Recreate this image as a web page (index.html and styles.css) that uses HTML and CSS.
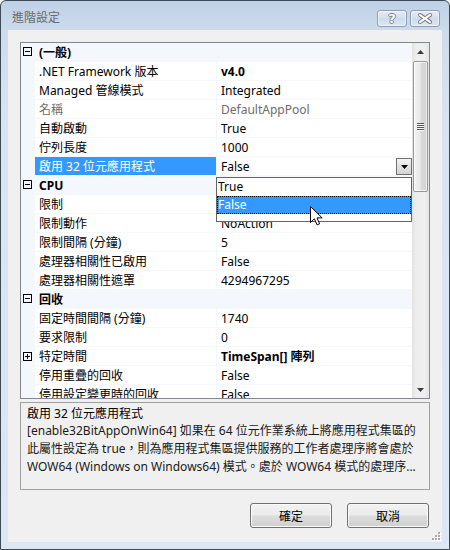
FILE: index.html
```html
<!DOCTYPE html>
<html lang="zh-Hant">
<head>
<meta charset="utf-8">
<title>進階設定</title>
<link rel="stylesheet" href="styles.css">
</head>
<body>
<div class="window">
  <div class="titlebar">
    <span class="title">進階設定</span>
    <div class="caption-btns">
      <div class="cbtn"><span class="help-glyph">?</span></div>
      <div class="cbtn">
        <svg width="14" height="11" viewBox="0 0 14 11">
          <path d="M2 2L12 9M12 2L2 9" stroke="#7a7f86" stroke-width="4" stroke-linecap="square"/>
          <path d="M2 2L12 9M12 2L2 9" stroke="#ffffff" stroke-width="2" stroke-linecap="square"/>
        </svg>
      </div>
    </div>
  </div>
  <div class="client">
    <div class="grid">
      <div class="rows">
        <div class="row cat">
          <span class="gut"><svg class="exp" width="9" height="9" viewBox="0 0 9 9"><rect x="0.5" y="0.5" width="8" height="8" fill="none" stroke="#000"/><path d="M2 4.5H7" stroke="#000"/></svg></span>
          <span class="catname">(一般)</span>
        </div>
        <div class="row"><span class="gut"></span><span class="name">.NET Framework 版本</span><span class="val bold">v4.0</span></div>
        <div class="row"><span class="gut"></span><span class="name">Managed 管線模式</span><span class="val">Integrated</span></div>
        <div class="row"><span class="gut"></span><span class="name gray">名稱</span><span class="val gray">DefaultAppPool</span></div>
        <div class="row"><span class="gut"></span><span class="name">自動啟動</span><span class="val">True</span></div>
        <div class="row"><span class="gut"></span><span class="name">佇列長度</span><span class="val">1000</span></div>
        <div class="row"><span class="gut"></span><span class="name selected">啟用 32 位元應用程式</span><span class="val editor">False<span class="dd-btn"><svg width="7" height="4" viewBox="0 0 7 4"><path d="M0 0H7L3.5 4Z" fill="#000"/></svg></span></span></div>
        <div class="row cat">
          <span class="gut"><svg class="exp" width="9" height="9" viewBox="0 0 9 9"><rect x="0.5" y="0.5" width="8" height="8" fill="none" stroke="#000"/><path d="M2 4.5H7" stroke="#000"/></svg></span>
          <span class="catname">CPU</span>
        </div>
        <div class="row"><span class="gut"></span><span class="name">限制</span><span class="val"></span></div>
        <div class="row"><span class="gut"></span><span class="name">限制動作</span><span class="val">NoAction</span></div>
        <div class="row"><span class="gut"></span><span class="name">限制間隔 (分鐘)</span><span class="val">5</span></div>
        <div class="row"><span class="gut"></span><span class="name">處理器相關性已啟用</span><span class="val">False</span></div>
        <div class="row"><span class="gut"></span><span class="name">處理器相關性遮罩</span><span class="val">4294967295</span></div>
        <div class="row cat">
          <span class="gut"><svg class="exp" width="9" height="9" viewBox="0 0 9 9"><rect x="0.5" y="0.5" width="8" height="8" fill="none" stroke="#000"/><path d="M2 4.5H7" stroke="#000"/></svg></span>
          <span class="catname">回收</span>
        </div>
        <div class="row"><span class="gut"></span><span class="name">固定時間間隔 (分鐘)</span><span class="val">1740</span></div>
        <div class="row"><span class="gut"></span><span class="name">要求限制</span><span class="val">0</span></div>
        <div class="row"><span class="gut"><svg class="exp" width="9" height="9" viewBox="0 0 9 9"><rect x="0.5" y="0.5" width="8" height="8" fill="none" stroke="#000"/><path d="M2 4.5H7M4.5 2V7" stroke="#000"/></svg></span><span class="name">特定時間</span><span class="val bold">TimeSpan[] 陣列</span></div>
        <div class="row"><span class="gut"></span><span class="name">停用重疊的回收</span><span class="val">False</span></div>
        <div class="row"><span class="gut"></span><span class="name">停用設定變更時的回收</span><span class="val">False</span></div>
      </div>
      <div class="vscroll">
        <div class="sb-btn"><svg width="7" height="4" viewBox="0 0 7 4"><path d="M0 4L3.5 0L7 4Z" fill="#3c3c3c"/></svg></div>
        <div class="sb-track">
          <div class="sb-thumb">
            <div class="grip"><i></i><i></i><i></i><i></i></div>
          </div>
        </div>
        <div class="sb-btn"><svg width="7" height="4" viewBox="0 0 7 4"><path d="M0 0H7L3.5 4Z" fill="#3c3c3c"/></svg></div>
      </div>
      <div class="dropdown">
        <div class="dd-item">True</div>
        <div class="dd-item sel">False</div>
      </div>
      <svg class="cursor" width="14" height="21" viewBox="0 0 14 21">
        <path d="M0.5 0.5V16.5L4.4 12.8L7.1 18.9L9.6 17.8L7 11.9H12.2Z" fill="#fff" stroke="#000" stroke-linejoin="round"/>
      </svg>
    </div>
    <div class="desc">
      <div class="desc-title">啟用 32 位元應用程式</div>
      <div class="desc-line">[enable32BitAppOnWin64] 如果在 64 位元作業系統上將應用程式集區的</div>
      <div class="desc-line">此屬性設定為 true，則為應用程式集區提供服務的工作者處理序將會處於</div>
      <div class="desc-line">WOW64 (Windows on Windows64) 模式。處於 WOW64 模式的處理序...</div>
    </div>
    <div class="buttons">
      <div class="btn">確定</div>
      <div class="btn">取消</div>
    </div>
    <svg class="sizegrip" width="9" height="9" viewBox="0 0 9 9">
      <rect x="7" y="1" width="2" height="2" fill="#fff"/><rect x="6" y="0" width="2" height="2" fill="#a8a8a8"/>
      <rect x="7" y="4" width="2" height="2" fill="#fff"/><rect x="6" y="3" width="2" height="2" fill="#a8a8a8"/>
      <rect x="4" y="4" width="2" height="2" fill="#fff"/><rect x="3" y="3" width="2" height="2" fill="#a8a8a8"/>
      <rect x="7" y="7" width="2" height="2" fill="#fff"/><rect x="6" y="6" width="2" height="2" fill="#a8a8a8"/>
      <rect x="4" y="7" width="2" height="2" fill="#fff"/><rect x="3" y="6" width="2" height="2" fill="#a8a8a8"/>
      <rect x="1" y="7" width="2" height="2" fill="#fff"/><rect x="0" y="6" width="2" height="2" fill="#a8a8a8"/>
    </svg>
  </div>
</div>
</body>
</html>
```

FILE: styles.css
```css
* { box-sizing: border-box; }
html, body { margin: 0; padding: 0; }
body {
  width: 450px;
  height: 550px;
  overflow: hidden;
  background: #ffffff;
  font-family: "Noto Sans", "Noto Sans CJK TC", sans-serif;
  font-size: 12px;
  color: #000;
}

.window {
  position: relative;
  width: 450px;
  height: 550px;
  border: 1px solid #3e4957;
  border-radius: 6px 6px 0 0;
  background: linear-gradient(#bfd1e6 0px, #cddbeb 30px, #d8e4f1 120px, #dce7f3 100%);
  padding: 0 7px 7px 7px;
  display: flex;
  flex-direction: column;
}

.titlebar {
  height: 29px;
  display: flex;
  justify-content: space-between;
  align-items: flex-start;
}
.title {
  margin: 7px 0 0 4px;
  line-height: 18px;
  font-size: 12px;
  color: #6a6a6a;
  font-family: "Noto Sans CJK TC", sans-serif;
}
.caption-btns {
  display: flex;
  gap: 3px;
  margin: 9px 2px 0 0;
}
.cbtn {
  width: 30px;
  height: 17px;
  border: 1px solid #8e9fb3;
  border-radius: 3px;
  background: linear-gradient(rgba(255,255,255,0.55), rgba(255,255,255,0.2) 50%, rgba(220,230,242,0.3) 50%, rgba(255,255,255,0.35));
  box-shadow: inset 0 0 0 1px rgba(255,255,255,0.55);
  display: flex;
  align-items: center;
  justify-content: center;
}
.help-glyph {
  font-family: "DejaVu Sans", sans-serif;
  font-weight: bold;
  font-size: 13px;
  line-height: 15px;
  color: #ffffff;
  text-shadow: 1px 0 #7a7f86, -1px 0 #7a7f86, 0 1px #7a7f86, 0 -1px #7a7f86;
}

.client {
  position: relative;
  flex: 1;
  background: #f0f0f0;
  padding: 12px;
  display: flex;
  flex-direction: column;
}

.grid {
  position: relative;
  height: 357px;
  border: 1px solid #828790;
  background: #ffffff;
  display: flex;
}
.rows {
  flex: 1;
  overflow: hidden;
  background: #f4f7fc;
}
.row {
  display: flex;
  height: 19px;
}
.gut {
  width: 14px;
  flex: none;
  padding: 5px 0 0 2px;
}
.exp { display: block; }
.row.cat .gut { padding-top: 4px; }
.name {
  width: 181px;
  height: 18px;
  flex: none;
  background: #ffffff;
  line-height: 19px;
  padding-left: 4px;
  white-space: nowrap;
  overflow: hidden;
}
.val {
  width: 195px;
  height: 18px;
  flex: none;
  margin-left: 1px;
  background: #ffffff;
  line-height: 19px;
  padding-left: 4px;
  white-space: nowrap;
  overflow: hidden;
}
.catname {
  line-height: 20px;
  padding-left: 4px;
  font-weight: bold;
}
.bold { font-weight: bold; }
.gray { color: #6d6d6d; }
.selected {
  background: #3399ff;
  color: #ffffff;
}
.editor { position: relative; }
.dd-btn {
  position: absolute;
  right: 0;
  top: 1px;
  width: 16px;
  height: 17px;
  border: 1px solid #707070;
  background: linear-gradient(#f3f3f3, #e2e2e2 50%, #d4d4d4);
  display: flex;
  align-items: center;
  justify-content: center;
}
.dd-btn svg { display: block; }

.vscroll {
  width: 17px;
  flex: none;
  display: flex;
  flex-direction: column;
  background: linear-gradient(to right, #e2e2e2, #eeeeee 25%, #efefef 75%, #e4e4e4);
}
.sb-btn {
  height: 17px;
  flex: none;
  display: flex;
  align-items: center;
  justify-content: center;
}
.sb-btn svg { display: block; }
.sb-track {
  flex: 1;
  padding: 1px 1px 0 1px;
}
.sb-thumb {
  height: 131px;
  border: 1px solid #979797;
  border-radius: 2px;
  background: linear-gradient(to right, #f4f4f4, #e9e9e9 45%, #dadada 55%, #d0d0d0);
  box-shadow: inset 0 0 0 1px rgba(255,255,255,0.7);
  display: flex;
  align-items: center;
  justify-content: center;
}
.grip {
  display: flex;
  flex-direction: column;
  gap: 1px;
}
.grip i {
  display: block;
  width: 7px;
  height: 1px;
  background: #565656;
  box-shadow: 0 1px 0 #f8f8f8;
}

.dropdown {
  position: absolute;
  left: 195px;
  top: 134px;
  width: 196px;
  height: 45px;
  border: 1px solid #646464;
  background: #ffffff;
}
.dd-item {
  height: 18px;
  line-height: 18px;
  padding-left: 1px;
  white-space: nowrap;
}
.dd-item.sel {
  background: #3399ff;
  color: #ffffff;
  outline: 1px dotted #000000;
  outline-offset: -1px;
}
.cursor {
  position: absolute;
  left: 289px;
  top: 163px;
}

.desc {
  height: 88px;
  margin-top: 3px;
  border: 1px solid #a0a0a0;
  background: #f0f0f0;
  padding: 2px 6px 0 6px;
  overflow: hidden;
}
.desc-title {
  line-height: 17px;
  white-space: nowrap;
}
.desc-line {
  line-height: 18px;
  white-space: nowrap;
  overflow: hidden;
  color: #1a1a1a;
}

.buttons {
  margin-top: 13px;
  display: flex;
  justify-content: flex-end;
  gap: 15px;
  padding-right: 1px;
}
.btn {
  width: 82px;
  height: 25px;
  border: 1px solid #707070;
  border-radius: 3px;
  background: linear-gradient(#f2f2f2 0%, #ebebeb 48%, #dddddd 52%, #cfcfcf 100%);
  box-shadow: inset 0 0 0 1px #fbfbfb;
  text-align: center;
  line-height: 23px;
  font-family: "Noto Sans CJK TC", sans-serif;
}
.sizegrip {
  position: absolute;
  right: 1px;
  bottom: 1px;
}
```
